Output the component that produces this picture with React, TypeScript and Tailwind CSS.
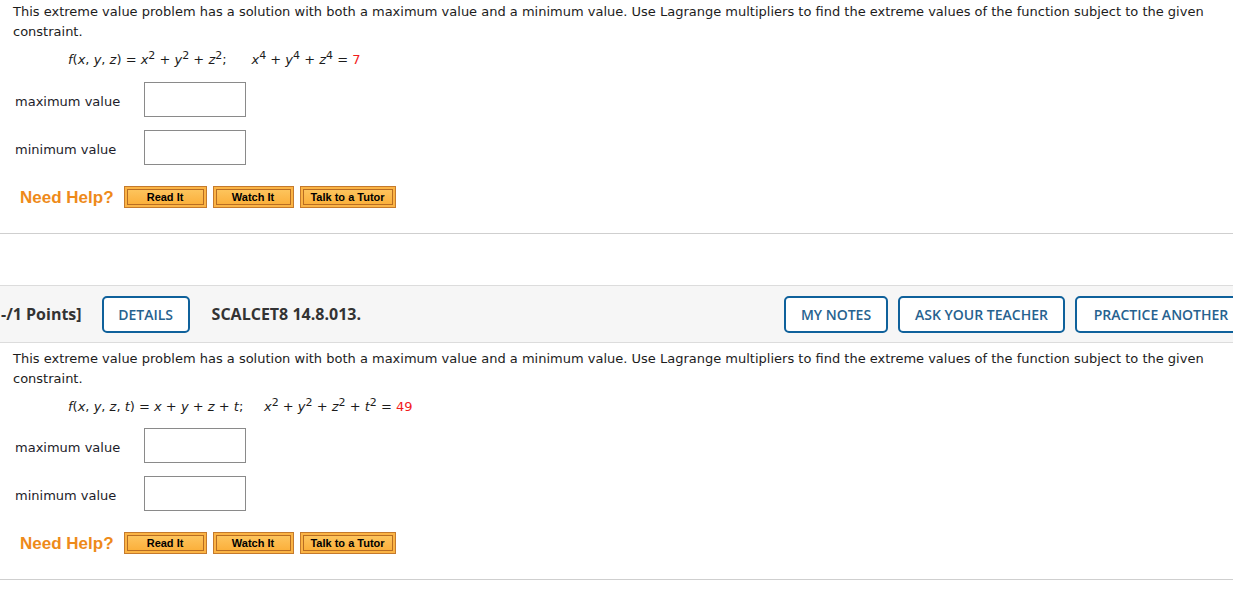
import React from 'react';

const body = { fontFamily: 'Verdana, "DejaVu Sans", sans-serif' };
const sansHead = { fontFamily: '"Open Sans", "Noto Sans", sans-serif' };
const arial = { fontFamily: '"Liberation Sans", Arial, sans-serif' };

const HelpButton = ({ label, width }: { label: string; width: string }) => (
  <button
    className={`h-[22px] ${width} border border-[#c57a2c] bg-[#fbb445] p-[2px]`}
    style={arial}
  >
    <span className="flex h-full w-full items-center justify-center border border-[#b86d22] bg-gradient-to-b from-[#fdc45c] to-[#fbb03b] text-[11px] font-bold leading-none text-black">
      {label}
    </span>
  </button>
);

const AnswerRow = ({ label }: { label: string }) => (
  <div className="flex items-center">
    <span className="w-[131px] pl-[2px] pt-[4px] text-[13px] text-[#1c1c2a]">{label}</span>
    <div className="h-[35px] w-[102px] border border-[#8a8a8a] bg-white" />
  </div>
);

const Problem = ({ formula, tight = false }: { formula: React.ReactNode; tight?: boolean }) => (
  <div className="px-[13px]" style={body}>
    <p className="pt-[2px] text-[13px] leading-[20px] text-[#1c1c1c]">
      This extreme value problem has a solution with both a maximum value and a minimum value. Use Lagrange
      multipliers to find the extreme values of the function subject to the given constraint.
    </p>
    <div className="mt-[8px] pl-[55px] text-[13px] leading-[20px] text-[#1c1c1c]">{formula}</div>
    <div className={`${tight ? 'mt-[11px]' : 'mt-[12px]'} flex flex-col gap-[13px]`}>
      <AnswerRow label="maximum value" />
      <AnswerRow label="minimum value" />
    </div>
    <div className="mt-[21px] flex h-[22px] items-center">
      <span className="pl-[7px] text-[17px] font-bold leading-none text-[#ee8a1a]" style={arial}>
        Need Help?
      </span>
      <div className="ml-[10px] flex gap-[6px]">
        <HelpButton label="Read It" width="w-[83px]" />
        <HelpButton label="Watch It" width="w-[81px]" />
        <HelpButton label="Talk to a Tutor" width="w-[96px]" />
      </div>
    </div>
  </div>
);

const Sup = ({ children }: { children: React.ReactNode }) => (
  <sup className="text-[11px]">{children}</sup>
);

const OutlineButton = ({ label, width }: { label: string; width: string }) => (
  <button
    className={`h-[37px] ${width} shrink-0 rounded-[5px] border-2 border-[#0f619b] bg-white text-[14px] font-semibold text-[#27628f]`}
    style={sansHead}
  >
    {label}
  </button>
);

export default function App() {
  return (
    <div className="h-[611px] w-[1233px] overflow-hidden bg-white">
      <Problem
        formula={
          <>
            <i>f</i>(<i>x</i>, <i>y</i>, <i>z</i>) = <i>x</i>
            <Sup>2</Sup> + <i>y</i>
            <Sup>2</Sup> + <i>z</i>
            <Sup>2</Sup>;&nbsp;&nbsp;&nbsp;&nbsp;&nbsp; <i>x</i>
            <Sup>4</Sup> + <i>y</i>
            <Sup>4</Sup> + <i>z</i>
            <Sup>4</Sup> = <span className="text-[#f21b1b]">7</span>
          </>
        }
      />
      <div className="mt-[25px] border-t border-[#cfcfcf]" />

      <div className="mt-[51px] flex h-[58px] items-center border-y border-[#dcdcdc] bg-[#f6f6f6]" style={sansHead}>
        <span className="pl-[1px] text-[16px] font-bold text-[#333]">-/1 Points]</span>
        <div className="ml-[20px]">
          <OutlineButton label="DETAILS" width="w-[88px]" />
        </div>
        <span className="ml-[22px] text-[16px] font-bold text-[#333]">SCALCET8 14.8.013.</span>
        <div className="-mr-[14px] ml-auto flex gap-[10px]">
          <OutlineButton label="MY NOTES" width="w-[104px]" />
          <OutlineButton label="ASK YOUR TEACHER" width="w-[167px]" />
          <OutlineButton label="PRACTICE ANOTHER" width="w-[172px]" />
        </div>
      </div>

      <div className="mt-[4px]">
        <Problem
          tight
          formula={
            <>
              <i>f</i>(<i>x</i>, <i>y</i>, <i>z</i>, <i>t</i>) = <i>x</i> + <i>y</i> + <i>z</i> + <i>t</i>;&nbsp;&nbsp;&nbsp;&nbsp;{' '}
              <i>x</i>
              <Sup>2</Sup> + <i>y</i>
              <Sup>2</Sup> + <i>z</i>
              <Sup>2</Sup> + <i>t</i>
              <Sup>2</Sup> = <span className="text-[#f21b1b]">49</span>
            </>
          }
        />
      </div>
      <div className="mt-[25px] border-t border-[#cfcfcf]" />
    </div>
  );
}
